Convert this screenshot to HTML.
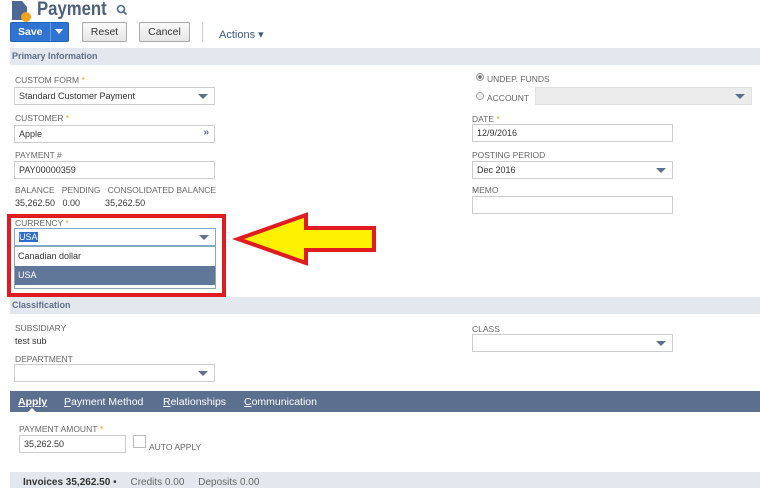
<!DOCTYPE html>
<html><head><meta charset="utf-8"><style>
*{margin:0;padding:0;box-sizing:border-box}
body{width:760px;height:488px;background:#fff;font-family:"Liberation Sans",sans-serif;position:relative;overflow:hidden;color:#333}
.a{position:absolute;white-space:nowrap}
.lbl{font-size:8.5px;color:#666}
.val{font-size:9px;color:#333}
.in{position:absolute;border:1px solid #ccc;background:#fff;font-size:9px;color:#333;padding:3px 4px;height:18px}
.dd::after{content:"";position:absolute;right:6px;top:6px;border-left:5px solid transparent;border-right:5px solid transparent;border-top:5px solid #5b6f8f}
.bar{position:absolute;left:10px;right:0;background:#e3e8ef;font-size:9px;font-weight:bold;color:#5f6f87;padding-left:2px}
.star{color:#e8a317}
.btn{position:absolute;top:22px;height:20px;border:1px solid #aaa;border-radius:2px;background:linear-gradient(#fafafa,#e6e6e6);font-size:10.5px;color:#333;text-align:center;line-height:18px}
</style></head><body>
<svg class="a" style="left:10px;top:0" width="24" height="22"><path d="M2 1h10l5 6v13H2z" fill="#4d6894"/><circle cx="16" cy="17" r="5" fill="#f0a31c"/></svg>
<div class="a" style="left:37px;top:0px;font-size:19px;line-height:19px;font-weight:bold;color:#4d5f79;transform:scaleX(0.88);transform-origin:0 0">Payment</div>
<svg class="a" style="left:116px;top:4px" width="12" height="12"><circle cx="5" cy="5" r="3.5" fill="none" stroke="#4d6894" stroke-width="1.6"/><path d="M7.5 7.5l3 3" stroke="#4d6894" stroke-width="1.8"/></svg>
<div class="a" style="left:10px;top:22px;width:59px;height:20px;background:#2f74d0;border-radius:2px;border:1px solid #2563b8"></div>
<div class="a" style="left:18px;top:26px;font-size:10.5px;font-weight:bold;color:#fff">Save</div>
<div class="a" style="left:50px;top:23px;width:1px;height:18px;background:#6fa0e0"></div>
<div class="a" style="left:55px;top:29px;border-left:4px solid transparent;border-right:4px solid transparent;border-top:5px solid #fff"></div>
<div class="btn" style="left:82px;width:45px">Reset</div>
<div class="btn" style="left:139px;width:51px">Cancel</div>
<div class="a" style="left:202px;top:22px;width:1px;height:20px;background:#ccc"></div>
<div class="a" style="left:219px;top:28px;font-size:11px;color:#3d5a80">Actions ▾</div>
<div class="bar" style="top:48px;height:17px;line-height:17px">Primary Information</div>

<div class="a lbl" style="left:15px;top:75px">CUSTOM FORM <span class="star">*</span></div>
<div class="in dd" style="left:14px;top:87px;width:201px">Standard Customer Payment</div>
<div class="a lbl" style="left:15px;top:113px">CUSTOMER <span class="star">*</span></div>
<div class="in" style="left:14px;top:125px;width:201px">Apple<span style="position:absolute;right:5px;top:1px;color:#5b6f8f;font-weight:bold;font-size:10px">»</span></div>
<div class="a lbl" style="left:15px;top:150px">PAYMENT #</div>
<div class="in" style="left:14px;top:161px;width:201px">PAY00000359</div>
<div class="a lbl" style="left:15px;top:185px">BALANCE &nbsp;&nbsp;PENDING &nbsp;&nbsp;CONSOLIDATED BALANCE</div>
<div class="a val" style="left:15px;top:198px">35,262.50 &nbsp;&nbsp;0.00 &nbsp;&nbsp;&nbsp;&nbsp;&nbsp;&nbsp;&nbsp;&nbsp;&nbsp;35,262.50</div>

<div class="a lbl" style="left:15px;top:218px">CURRENCY <span class="star">*</span></div>
<div class="in dd" style="left:14px;top:228px;width:202px;border-color:#7fa6d6"><span style="background:#2e6cc8;color:#fff">USA</span></div>
<div class="a" style="left:14px;top:246px;width:202px;height:43px;border:1px solid #8aa;background:#fff"></div>
<div class="a val" style="left:18px;top:251px">Canadian dollar</div>
<div class="a" style="left:15px;top:266px;width:200px;height:19px;background:#607799"></div>
<div class="a" style="left:18px;top:270px;font-size:9px;color:#fff">USA</div>
<div class="a" style="left:7px;top:214px;width:219px;height:83px;border:4px solid #e01b22"></div>
<svg class="a" style="left:230px;top:210px" width="150" height="60"><path d="M8 29L76 5V18H144V40H76V53Z" fill="#fff200" stroke="#e01b22" stroke-width="4" stroke-linejoin="miter"/></svg>

<div class="a" style="left:476px;top:73px;width:8px;height:8px;border-radius:50%;border:1px solid #999;background:radial-gradient(#666 35%,#eee 45%)"></div>
<div class="a lbl" style="left:487px;top:74px">UNDEP. FUNDS</div>
<div class="a" style="left:476px;top:92px;width:8px;height:8px;border-radius:50%;border:1px solid #aaa;background:#eee"></div>
<div class="a lbl" style="left:487px;top:93px">ACCOUNT</div>
<div class="in dd" style="left:535px;top:87px;width:217px;background:#ececec;border-color:#e2e2e2"></div>
<div class="a lbl" style="left:472px;top:114px">DATE <span class="star">*</span></div>
<div class="in" style="left:472px;top:124px;width:201px">12/9/2016</div>
<div class="a lbl" style="left:472px;top:150px">POSTING PERIOD</div>
<div class="in dd" style="left:472px;top:161px;width:201px">Dec 2016</div>
<div class="a lbl" style="left:472px;top:185px">MEMO</div>
<div class="in" style="left:472px;top:196px;width:201px"></div>

<div class="bar" style="top:297px;height:17px;line-height:17px">Classification</div>
<div class="a lbl" style="left:15px;top:323px">SUBSIDIARY</div>
<div class="a val" style="left:15px;top:336px">test sub</div>
<div class="a lbl" style="left:15px;top:354px">DEPARTMENT</div>
<div class="in dd" style="left:14px;top:364px;width:201px"></div>
<div class="a lbl" style="left:472px;top:324px">CLASS</div>
<div class="in dd" style="left:472px;top:334px;width:201px"></div>

<div class="a" style="left:10px;top:391px;width:750px;height:21px;background:#5b6f8f"></div>
<div class="a" style="left:18px;top:396px;font-size:10.5px;color:#fff;font-weight:bold;text-decoration:underline">Apply</div>
<div class="a" style="left:64px;top:396px;font-size:10.5px;color:#fff"><u>P</u>ayment Method</div>
<div class="a" style="left:163px;top:396px;font-size:10.5px;color:#fff"><u>R</u>elationships</div>
<div class="a" style="left:244px;top:396px;font-size:10.5px;color:#fff"><u>C</u>ommunication</div>
<div class="a" style="left:28px;top:408px;border-left:4px solid transparent;border-right:4px solid transparent;border-bottom:4px solid #fff"></div>

<div class="a lbl" style="left:19px;top:424px">PAYMENT AMOUNT <span class="star">*</span></div>
<div class="in" style="left:19px;top:435px;width:107px">35,262.50</div>
<div class="a" style="left:133px;top:435px;width:13px;height:13px;border:1px solid #bbb"></div>
<div class="a lbl" style="left:149px;top:442px">AUTO APPLY</div>
<div class="a" style="left:10px;top:472px;width:750px;height:16px;background:#e3e8ef"></div>
<div class="a" style="left:23px;top:477px;font-size:10px;color:#333"><b>Invoices 35,262.50</b> • &nbsp;&nbsp;&nbsp;&nbsp;<span style="color:#666">Credits 0.00 &nbsp;&nbsp;&nbsp;&nbsp;Deposits 0.00</span></div>
</body></html>
